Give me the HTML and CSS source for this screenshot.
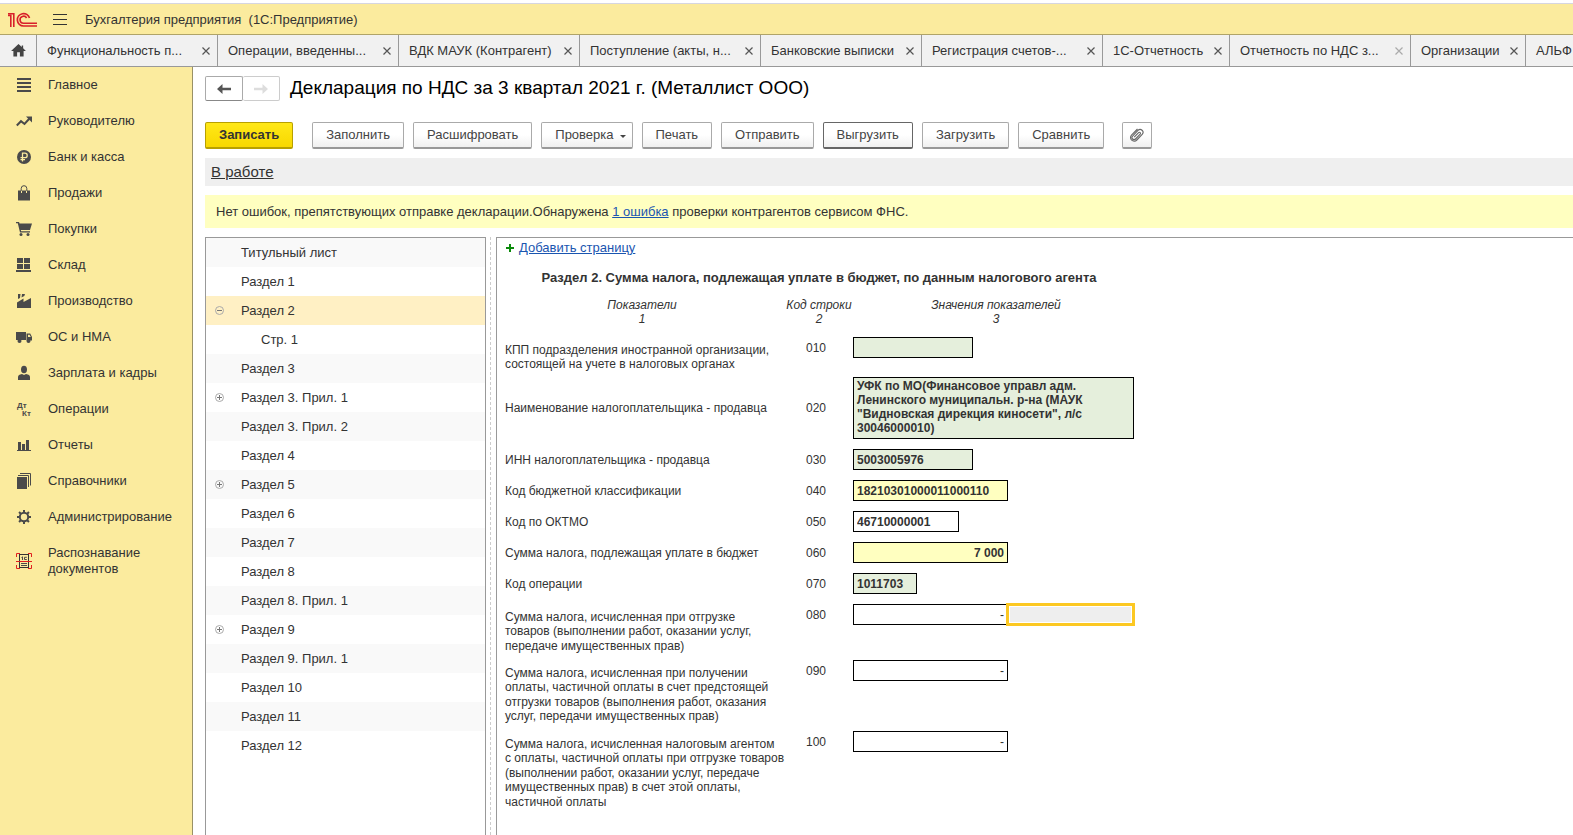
FILE: index.html
```html
<!DOCTYPE html>
<html lang="ru">
<head>
<meta charset="utf-8">
<title>Бухгалтерия предприятия</title>
<link rel="stylesheet" href="styles.css">
</head>
<body>
<div class="app">
  <header class="topbar">
    <svg class="logo" viewBox="0 0 30 16" width="30" height="16" fill="none" stroke="#d8202a" aria-hidden="true">
      <path stroke-width="1.600" d="M0 3.500H2.800V15M0 1.800H5.800V15"/>
      <path stroke-width="1.700" d="M21.500 6A6.200 6.200 0 1 0 15.500 14H29"/>
      <path stroke-width="1.600" d="M18.600 6A3.500 3.500 0 1 0 15.500 11.200H29"/>
    </svg>
    <button class="burger" type="button" aria-label="Меню"><span></span><span></span><span></span></button>
    <span class="app-title">Бухгалтерия предприятия&nbsp; (1С:Предприятие)</span>
  </header>

  <nav class="tabs" aria-label="Открытые окна">
    <button class="tab-home" type="button" aria-label="Начальная страница">
      <svg viewBox="0 0 16 14" width="15" height="13"><path fill="#444" d="M8 0L0 7.500H2.500V13.500H6.500V9H9.500V13.500H13.500V7.500H16L13 4.700V1.500H11.500V3.300Z"/></svg>
    </button>
    <div class="tab wide"><button class="tab-name" type="button">Функциональность п...</button><button class="tab-close" type="button" aria-label="Закрыть"><svg viewBox="0 0 8 8" width="8" height="8"><path d="M.5.5L7.500 7.500M7.500.5L.5 7.500"/></svg></button></div>
    <div class="tab wide"><button class="tab-name" type="button">Операции, введенны...</button><button class="tab-close" type="button" aria-label="Закрыть"><svg viewBox="0 0 8 8" width="8" height="8"><path d="M.5.5L7.500 7.500M7.500.5L.5 7.500"/></svg></button></div>
    <div class="tab wide"><button class="tab-name" type="button">ВДК МАУК (Контрагент)</button><button class="tab-close" type="button" aria-label="Закрыть"><svg viewBox="0 0 8 8" width="8" height="8"><path d="M.5.5L7.500 7.500M7.500.5L.5 7.500"/></svg></button></div>
    <div class="tab wide"><button class="tab-name" type="button">Поступление (акты, н...</button><button class="tab-close" type="button" aria-label="Закрыть"><svg viewBox="0 0 8 8" width="8" height="8"><path d="M.5.5L7.500 7.500M7.500.5L.5 7.500"/></svg></button></div>
    <div class="tab medium"><button class="tab-name" type="button">Банковские выписки</button><button class="tab-close" type="button" aria-label="Закрыть"><svg viewBox="0 0 8 8" width="8" height="8"><path d="M.5.5L7.500 7.500M7.500.5L.5 7.500"/></svg></button></div>
    <div class="tab wide"><button class="tab-name" type="button">Регистрация счетов-...</button><button class="tab-close" type="button" aria-label="Закрыть"><svg viewBox="0 0 8 8" width="8" height="8"><path d="M.5.5L7.500 7.500M7.500.5L.5 7.500"/></svg></button></div>
    <div class="tab small"><button class="tab-name" type="button">1С-Отчетность</button><button class="tab-close" type="button" aria-label="Закрыть"><svg viewBox="0 0 8 8" width="8" height="8"><path d="M.5.5L7.500 7.500M7.500.5L.5 7.500"/></svg></button></div>
    <div class="tab wide"><button class="tab-name" type="button">Отчетность по НДС з...</button><button class="tab-close faded" type="button" aria-label="Закрыть"><svg viewBox="0 0 8 8" width="8" height="8"><path d="M.5.5L7.500 7.500M7.500.5L.5 7.500"/></svg></button></div>
    <div class="tab compact"><button class="tab-name" type="button">Организации</button><button class="tab-close" type="button" aria-label="Закрыть"><svg viewBox="0 0 8 8" width="8" height="8"><path d="M.5.5L7.500 7.500M7.500.5L.5 7.500"/></svg></button></div>
    <div class="tab wide"><button class="tab-name" type="button">АЛЬФ</button></div>
  </nav>

  <div class="workspace">
    <nav class="sidebar" aria-label="Разделы">
      <button type="button"><svg viewBox="0 0 16 16"><path d="M1 1h14v2H1zM1 5h14v2H1zM1 9h14v2H1zM1 13h14v2H1z"/></svg><span>Главное</span></button>
      <button type="button"><svg viewBox="0 0 16 16"><path class="line" d="M.8 12.500L5 8.200L8.500 11L13.500 5.500"/><path d="M10 3.500H16V9.500Z"/></svg><span>Руководителю</span></button>
      <button type="button"><svg viewBox="0 0 16 16"><circle cx="8" cy="8" r="7"/><path class="cut" d="M6.500 12.500V4.200H9A2.200 2.200 0 0 1 9 8.600H4.500M4.500 10.600H9"/></svg><span>Банк и касса</span></button>
      <button type="button"><svg viewBox="0 0 16 16"><path d="M2 5.500H5V8H6V5.500H10V8H11V5.500H14V15.500H2Z"/><path class="thin" d="M5.200 6V3.500A2.800 2.800 0 0 1 10.800 3.500V6"/></svg><span>Продажи</span></button>
      <button type="button"><svg viewBox="0 0 16 16"><path d="M0 1H3L3.600 2.500H16L14 9H4.800L5.200 10.200H14V11.500H4L1.800 2.300H0Z"/><circle cx="5" cy="13.500" r="1.500"/><circle cx="12" cy="13.500" r="1.500"/></svg><span>Покупки</span></button>
      <button type="button"><svg viewBox="0 0 16 16"><path d="M1 1h6v5H1zM8 1h6v5H8zM1 7h6v5H1zM8 7h6v5H8zM0 13h15v2H0z"/></svg><span>Склад</span></button>
      <button type="button"><svg viewBox="0 0 16 16"><path d="M1 15V9.500L7.500 5.500V9L15 5V15ZM2 1H4.500L4 5L2 6ZM6 1H9L8.300 3L5.500 4.500Z"/></svg><span>Производство</span></button>
      <button type="button"><svg viewBox="0 0 16 16"><path d="M0 3H10V11H0Z"/><path fill-rule="evenodd" d="M10.500 4.500H14.200L16 8V11.500H10.500ZM12 5.700V8H14.800L13.600 5.700Z"/><circle cx="3.500" cy="12" r="2"/><circle cx="12.500" cy="12" r="2"/></svg><span>ОС и НМА</span></button>
      <button type="button"><svg viewBox="0 0 16 16"><ellipse cx="8" cy="4.500" rx="3" ry="3.800"/><path d="M2 15V12Q2 9.500 6 9L8 10L10 9Q14 9.500 14 12V15Z"/></svg><span>Зарплата и кадры</span></button>
      <button type="button"><svg viewBox="0 0 16 16"><text x="1" y="7">Дт</text><text x="6" y="15">Кт</text></svg><span>Операции</span></button>
      <button type="button"><svg viewBox="0 0 16 16"><path d="M2 5h3v8H2zM6 7h3v6H6zM10 3h3v10h-3zM1 13h14v1H1z"/></svg><span>Отчеты</span></button>
      <button type="button"><svg viewBox="0 0 16 16"><path d="M1 4h10v12H1z"/><path class="thin" d="M2 2.500H12.500V14M4 .5H14.500V12.500"/></svg><span>Справочники</span></button>
      <button type="button"><svg viewBox="0 0 16 16"><circle class="ring" cx="8" cy="8" r="4.200"/><path class="teeth" d="M8 1V4M8 12V15M1 8H4M12 8H15M3.050 3.050L5 5M11 11L12.950 12.950M3.050 12.950L5 11M11 5L12.950 3.050"/></svg><span>Администрирование</span></button>
      <button type="button"><svg viewBox="0 0 16 16"><rect x="3.500" y="1.500" width="9" height="13" fill="none" stroke="#333"/><path class="thin" d="M5.500 4.500L6.500 3.800V7M10.800 4.300H8.500V6.500H10.800M5 10.500H11M5 12.500H11"/><path fill="none" stroke="#e02020" d="M0 8.500H16M.5 4V.5H4M12 .5H15.500V4M.5 12V15.500H4M12 15.500H15.500V12"/></svg><span>Распознавание документов</span></button>
    </nav>

    <main class="main">
      <div class="heading">
        <div class="history">
          <button type="button" aria-label="Назад"><svg viewBox="0 0 14 10" width="14" height="10"><path fill="#555" d="M0 5L5.500 0V3.800H14V6.200H5.500V10Z"/></svg></button>
          <button type="button" aria-label="Вперед" disabled><svg viewBox="0 0 14 10" width="14" height="10"><path fill="#ddd" d="M14 5L8.500 0V3.800H0V6.200H8.500V10Z"/></svg></button>
        </div>
        <h1>Декларация по НДС за 3 квартал 2021 г. (Металлист ООО)</h1>
      </div>

      <div class="toolbar">
        <button class="btn primary" type="button">Записать</button>
        <div class="btn-group">
          <button class="btn" type="button">Заполнить</button>
          <button class="btn" type="button">Расшифровать</button>
          <button class="btn dropdown" type="button">Проверка<span class="caret"></span></button>
          <button class="btn" type="button">Печать</button>
          <button class="btn" type="button">Отправить</button>
          <button class="btn current" type="button">Выгрузить</button>
          <button class="btn" type="button">Загрузить</button>
          <button class="btn" type="button">Сравнить</button>
        </div>
        <button class="btn icon" type="button" aria-label="Вложения"><svg viewBox="0 0 14 14" width="14" height="14"><path fill="none" stroke="#666" stroke-width="1.100" d="M4.200 9.200L8.600 4.600A1 1 0 0 1 10.200 6.100L5.500 11A2 2 0 0 1 2.600 8.100L8 2.400A2.800 2.800 0 0 1 12.200 6.300L6.800 12A3.600 3.600 0 0 1 1.500 7.100L7.500 1"/></svg></button>
      </div>

      <div class="status"><a href="#">В работе</a></div>
      <div class="notice">Нет ошибок, препятствующих отправке декларации.Обнаружена <a href="#">1 ошибка</a> проверки контрагентов сервисом ФНС.</div>

      <div class="panels">
        <ul class="tree">
          <li><button type="button">Титульный лист</button></li>
          <li><button type="button">Раздел 1</button></li>
          <li class="selected"><button type="button"><span class="node open"></span>Раздел 2</button></li>
          <li class="child"><button type="button">Стр. 1</button></li>
          <li><button type="button">Раздел 3</button></li>
          <li><button type="button"><span class="node"></span>Раздел 3. Прил. 1</button></li>
          <li><button type="button">Раздел 3. Прил. 2</button></li>
          <li><button type="button">Раздел 4</button></li>
          <li><button type="button"><span class="node"></span>Раздел 5</button></li>
          <li><button type="button">Раздел 6</button></li>
          <li><button type="button">Раздел 7</button></li>
          <li><button type="button">Раздел 8</button></li>
          <li><button type="button">Раздел 8. Прил. 1</button></li>
          <li><button type="button"><span class="node"></span>Раздел 9</button></li>
          <li><button type="button">Раздел 9. Прил. 1</button></li>
          <li><button type="button">Раздел 10</button></li>
          <li><button type="button">Раздел 11</button></li>
          <li><button type="button">Раздел 12</button></li>
        </ul>
        <div class="splitter"></div>
        <section class="sheet">
          <div class="add-page"><svg viewBox="0 0 8 8" width="8" height="8" aria-hidden="true"><path fill="#0a8a0a" d="M3 0h2v3h3v2H5v3H3V5H0V3h3z"/></svg><a href="#">Добавить страницу</a></div>
          <table class="form">
            <caption>Раздел 2. Сумма налога, подлежащая уплате в бюджет, по данным налогового агента</caption>
            <colgroup><col class="col-name"><col class="col-code"><col class="col-value"></colgroup>
            <thead>
              <tr><th>Показатели<br>1</th><th>Код строки<br>2</th><th>Значения показателей<br>3</th></tr>
            </thead>
            <tbody>
              <tr class="lines-2"><td class="name"><label for="f010">КПП подразделения иностранной организации,<br>состоящей на учете в налоговых органах</label></td><td class="code">010</td><td><input id="f010" class="field w-m green" type="text"></td></tr>
              <tr class="tall"><td class="name"><label for="f020">Наименование налогоплательщика - продавца</label></td><td class="code">020</td><td><textarea id="f020" class="field w-xl green">УФК по МО(Финансовое управл адм. Ленинского муниципальн. р-на (МАУК "Видновская дирекция киносети", л/с 30046000010)</textarea></td></tr>
              <tr><td class="name"><label for="f030">ИНН налогоплательщика - продавца</label></td><td class="code">030</td><td><input id="f030" class="field w-m green" type="text" value="5003005976"></td></tr>
              <tr><td class="name"><label for="f040">Код бюджетной классификации</label></td><td class="code">040</td><td><input id="f040" class="field w-l yellow" type="text" value="18210301000011000110"></td></tr>
              <tr><td class="name"><label for="f050">Код по ОКТМО</label></td><td class="code">050</td><td><input id="f050" class="field w-s" type="text" value="46710000001"></td></tr>
              <tr><td class="name"><label for="f060">Сумма налога, подлежащая уплате в бюджет</label></td><td class="code">060</td><td><input id="f060" class="field w-l yellow number" type="text" value="7 000"></td></tr>
              <tr><td class="name"><label for="f070">Код операции</label></td><td class="code">070</td><td><input id="f070" class="field w-xs green" type="text" value="1011703"></td></tr>
              <tr class="lines-3"><td class="name"><label for="f080">Сумма налога, исчисленная при отгрузке<br>товаров (выполнении работ, оказании услуг,<br>передаче имущественных прав)</label></td><td class="code">080</td><td><div class="pair"><input id="f080" class="field w-l number plain" type="text" value="-"><input class="active-cell" type="text" aria-label="Выделенная ячейка"></div></td></tr>
              <tr class="lines-4"><td class="name"><label for="f090">Сумма налога, исчисленная при получении<br>оплаты, частичной оплаты в счет предстоящей<br>отгрузки товаров (выполнения работ, оказания<br>услуг, передачи имущественных прав)</label></td><td class="code">090</td><td><input id="f090" class="field w-l number plain" type="text" value="-"></td></tr>
              <tr class="lines-5"><td class="name"><label for="f100">Сумма налога, исчисленная налоговым агентом<br>с оплаты, частичной оплаты при отгрузке товаров<br>(выполнении работ, оказании услуг, передаче<br>имущественных прав) в счет этой оплаты,<br>частичной оплаты</label></td><td class="code">100</td><td><input id="f100" class="field w-l number plain" type="text" value="-"></td></tr>
            </tbody>
          </table>
        </section>
      </div>
    </main>
  </div>
</div>
</body>
</html>
```

FILE: styles.css
```css
* { box-sizing: border-box; }

body {
  margin: 0;
  background: #fff;
  color: #333;
  font: 13px/16px "Liberation Sans", Arial, sans-serif;
}

button {
  margin: 0;
  padding: 0;
  border: 0;
  background: none;
  color: inherit;
  font: inherit;
}

a { color: #1a55b0; }

.app {
  display: flex;
  flex-direction: column;
  height: 100vh;
  padding-top: 3px;
  overflow: hidden;
}

/* Window title */
.topbar {
  display: flex;
  flex: none;
  align-items: center;
  height: 32px;
  padding: 1px 0 0 8px;
  border-top: 1px solid #d6d6e0;
  border-bottom: 1px solid #b0a468;
  background: #fbeb9e;
}

.burger {
  display: flex;
  flex-direction: column;
  gap: 4px;
  width: 14px;
  margin: 0 18px 0 15px;
}

.burger span { height: 1px; background: #333; }

/* Window tabs */
.tabs {
  display: flex;
  flex: none;
  height: 32px;
  border-bottom: 1px solid #999;
  background: #f1f1f1;
  overflow: hidden;
}

.tab-home {
  flex: none;
  width: 37px;
  padding-top: 4px;
  border-right: 1px solid #999;
}

.tab {
  display: flex;
  flex: none;
  align-items: center;
  justify-content: space-between;
  padding: 1px 7px 0 10px;
  border-right: 1px solid #999;
  white-space: nowrap;
}

.wide { width: 181px; }
.medium { width: 161px; }
.small { width: 127px; }
.compact { width: 115px; }

.tab-close { height: 8px; line-height: 0; }
.tab-close path { stroke: #555; stroke-width: 1.2; }
.faded path { stroke: #aaa; }

/* Sections sidebar */
.workspace {
  display: flex;
  flex: 1;
  min-height: 0;
}

.sidebar {
  flex: none;
  width: 193px;
  border-right: 1px solid #999166;
  background: #fbeb9e;
}

.sidebar button {
  display: flex;
  gap: 16px;
  align-items: center;
  width: 100%;
  min-height: 36px;
  padding: 0 8px 0 16px;
  text-align: left;
}

.sidebar button:last-child { min-height: 52px; }
.sidebar button:last-child span { max-width: 110px; }
.sidebar svg { flex: none; width: 16px; height: 16px; fill: #4a4a4a; }
.sidebar .line { fill: none; stroke: #4a4a4a; stroke-width: 2; }
.sidebar .cut { fill: none; stroke: #fbeb9e; stroke-width: 1.3; }
.sidebar .thin { fill: none; stroke: #4a4a4a; stroke-width: 1; }
.sidebar .ring { fill: none; stroke: #4a4a4a; stroke-width: 2; }
.sidebar .teeth { stroke: #4a4a4a; stroke-width: 2; }
.sidebar text { font-size: 8px; font-weight: bold; }

/* Document area */
.main {
  display: flex;
  flex: 1;
  flex-direction: column;
  min-width: 0;
  padding: 9px 0 0 12px;
}

.heading {
  display: flex;
  align-items: center;
  gap: 10px;
  height: 25px;
}

.history { display: flex; }

.history button {
  width: 38px;
  height: 25px;
  border: 1px solid #aaa;
  border-bottom-color: #888;
  border-radius: 2px;
  line-height: 0;
}

.history button:disabled {
  width: 37px;
  border-color: #ccc;
  border-left: 0;
}

h1 {
  margin: 0;
  padding-bottom: 2px;
  color: #000;
  font-size: 19px;
  font-weight: normal;
  line-height: 24px;
  white-space: nowrap;
}

.toolbar {
  display: flex;
  margin-top: 21px;
}

.btn-group {
  display: flex;
  gap: 9px;
  margin: 0 18px 0 19px;
}

.btn {
  height: 27px;
  padding: 0 13px;
  border: 1px solid #aaa;
  border-bottom: 2px solid #999;
  border-radius: 2px;
  background: linear-gradient(#fff 50%, #f0f0f0);
  color: #444;
  white-space: nowrap;
}

.primary {
  border-color: #b8a000;
  background: linear-gradient(#ffe818, #f8d800);
  color: #333;
  font-weight: bold;
}

.current { border-color: #666; }

.dropdown {
  display: flex;
  align-items: center;
  gap: 6px;
  padding-right: 6px;
}

.caret {
  margin-top: 3px;
  border: 3px solid transparent;
  border-top-color: #444;
  border-bottom: 0;
}

.icon { width: 30px; padding: 0; line-height: 0; }

.status {
  margin-top: 9px;
  padding: 4px 6px;
  background: #efefef;
  font-size: 15px;
  line-height: 20px;
}

.status a { color: #333; }

.notice {
  margin-top: 9px;
  padding: 9px 11px 8px;
  background: #ffffc0;
}

.panels {
  display: flex;
  flex: 1;
  min-height: 0;
  margin-top: 9px;
}

/* Sections of the declaration */
.tree {
  flex: none;
  width: 281px;
  margin: 0;
  padding: 0;
  border: 1px solid #999;
  border-bottom: 0;
  list-style: none;
}

.tree li:nth-child(odd) { background: #f9f9f9; }
.tree li.selected { background: #fff0c4; }

.tree button {
  position: relative;
  display: block;
  width: 100%;
  height: 29px;
  padding-left: 35px;
  text-align: left;
}

.tree .child button { padding-left: 55px; }

.node {
  position: absolute;
  top: 10px;
  left: 9px;
  width: 9px;
  height: 9px;
  border: 1px solid #aaa;
  border-radius: 50%;
  background:
    linear-gradient(#777, #777) center / 5px 1px no-repeat,
    linear-gradient(#777, #777) center / 1px 5px no-repeat;
}

.node.open { background: linear-gradient(#777, #777) center / 5px 1px no-repeat; }

.splitter {
  flex: none;
  width: 1px;
  margin: 0 5px 0 4px;
  background: repeating-linear-gradient(#ccc 0 3px, #fff 3px 5px);
}

/* Declaration sheet */
.sheet {
  flex: 1;
  min-width: 0;
  border: 1px solid #999;
  border-right: 0;
  border-bottom: 0;
  padding-left: 2px;
  overflow: hidden;
}

.add-page {
  display: flex;
  align-items: center;
  gap: 5px;
  padding: 2px 0 0 7px;
}

.form {
  width: 640px;
  table-layout: fixed;
  border-collapse: collapse;
  font-size: 12px;
  line-height: 1.2;
}

.col-name, .col-value { width: 286px; }
.col-code { width: 68px; }

.form caption {
  padding: 14px 0 11px;
  font-size: 13px;
  font-weight: bold;
  line-height: 16px;
}

.form th {
  height: 40px;
  padding: 1px 0 0;
  font-style: italic;
  font-weight: normal;
  line-height: 14px;
  vertical-align: top;
}

.form td {
  height: 31px;
  padding: 0;
  vertical-align: top;
}

.form .name { padding: 4px 0 0 6px; white-space: nowrap; }
.form .code { padding: 4px 6px 0 0; text-align: center; }

.form .tall td { height: 72px; }
.form .tall .name, .form .tall .code { padding-bottom: 14px; vertical-align: middle; }
.form .lines-2 td { height: 40px; }
.form .lines-3 td { height: 56px; }
.form .lines-4 td { height: 71px; }
.form .lines-2 .name, .form .lines-3 .name, .form .lines-4 .name, .form .lines-5 .name { padding-top: 6px; }

.field {
  display: block;
  height: 21px;
  padding: 0 3px;
  border: 1px solid #000;
  border-radius: 0;
  background: #fff;
  color: #333;
  font: bold 12px/14px "Liberation Sans", Arial, sans-serif;
}

textarea.field {
  height: 62px;
  padding-top: 1px;
  resize: none;
  overflow: hidden;
}

.w-xs { width: 64px; }
.w-s { width: 106px; }
.w-m { width: 120px; }
.w-l { width: 155px; }
.w-xl { width: 281px; }

.green { background: #e5efdc; }
.yellow { background: #ffffc0; }
.number { text-align: right; }
.plain { font-weight: normal; }

.pair { display: flex; }

.active-cell {
  width: 129px;
  height: 23px;
  margin: -1px 0 -1px -2px;
  padding: 0 3px;
  border: 3px solid #fcc822;
  background: #eee;
  box-shadow: inset 0 0 0 1px #fff;
}
```
